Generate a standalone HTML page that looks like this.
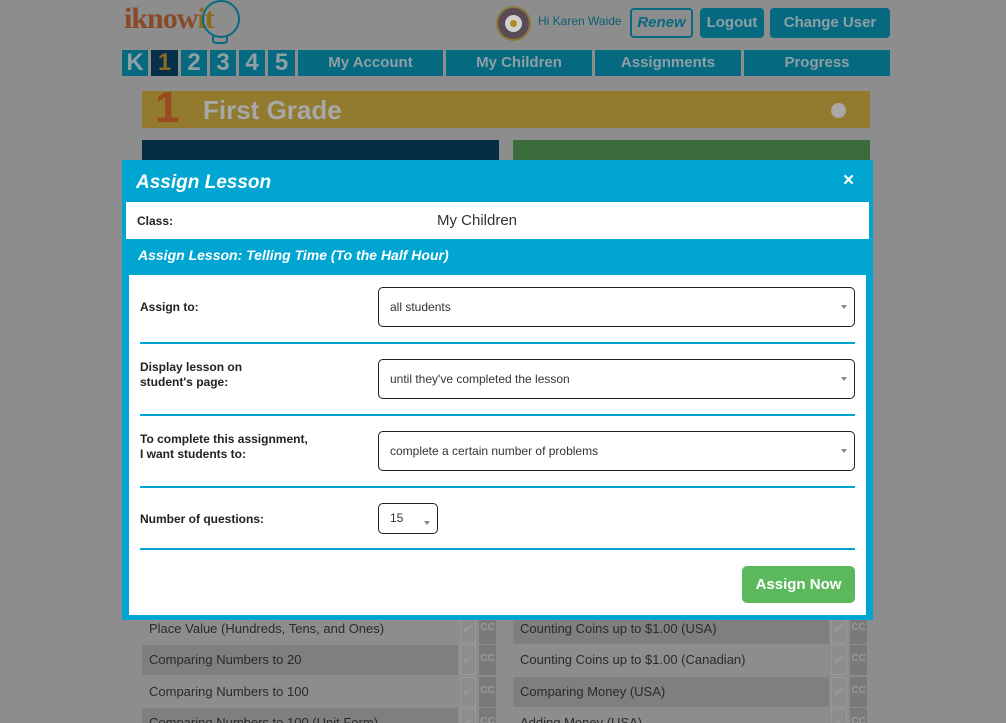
<!DOCTYPE html>
<html style="overflow:hidden;width:1006px;height:723px"><head><meta charset="utf-8"><style>
*{box-sizing:border-box;margin:0;padding:0}
body{width:1006px;height:723px;overflow:hidden;background:#8d8d8d;font-family:"Liberation Sans",sans-serif;position:relative}
.a{position:absolute}
.nav{background:#056a80;color:#8f9fa6;font-weight:bold;text-align:center}
.lbl{position:absolute;left:140px;font-size:12px;font-weight:bold;color:#222;line-height:15px}
.sel{position:absolute;left:378px;width:477px;height:40px;border:1px solid #222;border-radius:5px;background:#fff;font-size:12px;color:#333;padding:0 11px;line-height:38px}
.sel:after{content:"";position:absolute;right:7px;top:17px;border:3px solid transparent;border-top:4px solid #888}
.hr{position:absolute;left:140px;width:715px;height:2px;background:#00a6d1}
.row{position:absolute;height:30px;font-size:13px;color:#2a2a2a;line-height:30px;padding-left:7px}
.ck{position:absolute;width:16px;height:30px;border:1px solid #9a9a9a;color:#9a9a9a;font-size:13px;text-align:center;line-height:28px}
.cc{position:absolute;width:17px;height:30px;background:#7a7a7a;color:#999;font-size:10px;font-weight:bold;text-align:center;line-height:28px}
</style></head><body>
<div class="a" style="left:124px;top:2px;font-family:'Liberation Serif',serif;font-size:30px;font-weight:bold;letter-spacing:-1px"><span style="color:#8a4a2a">iknow</span><span style="color:#8c6a1e">it</span></div>
<div class="a" style="left:202px;top:0;width:38px;height:38px;border:2px solid #086a80;border-radius:50%"></div>
<div class="a" style="left:212px;top:36px;width:16px;height:8px;border:2px solid #086a80;border-top:none;border-radius:0 0 4px 4px"></div>
<div class="a" style="left:496px;top:6px;width:35px;height:35px;border-radius:50%;background:#5a4a55;border:2px solid #8a7a3a"></div>
<div class="a" style="left:505px;top:15px;width:17px;height:17px;border-radius:50%;background:#d0d0d0"></div>
<div class="a" style="left:510px;top:20px;width:7px;height:7px;border-radius:50%;background:#b08a20"></div>
<div class="a" style="left:538px;top:14px;font-size:12px;color:#0b5f73">Hi Karen Waide</div>
<div class="a" style="left:630px;top:8px;width:63px;height:30px;border:2px solid #086a80;border-radius:4px;color:#086a80;font-weight:bold;font-style:italic;font-size:15px;text-align:center;line-height:26px">Renew</div>
<div class="a nav" style="left:700px;top:8px;width:64px;height:30px;border-radius:4px;font-size:15px;line-height:30px">Logout</div>
<div class="a nav" style="left:770px;top:8px;width:120px;height:30px;border-radius:4px;font-size:15px;line-height:30px">Change User</div>
<div class="a nav" style="left:122px;top:50px;width:26px;height:26px;font-size:24px;line-height:26px">K</div>
<div class="a nav" style="left:151px;top:50px;width:27px;height:26px;font-size:24px;line-height:26px;background:#05304a;color:#8a6a20">1</div>
<div class="a nav" style="left:181px;top:50px;width:26px;height:26px;font-size:24px;line-height:26px">2</div>
<div class="a nav" style="left:210px;top:50px;width:26px;height:26px;font-size:24px;line-height:26px">3</div>
<div class="a nav" style="left:239px;top:50px;width:26px;height:26px;font-size:24px;line-height:26px">4</div>
<div class="a nav" style="left:268px;top:50px;width:27px;height:26px;font-size:24px;line-height:26px">5</div>
<div class="a nav" style="left:298px;top:50px;width:145px;height:26px;font-size:15px;line-height:26px">My Account</div>
<div class="a nav" style="left:446px;top:50px;width:146px;height:26px;font-size:15px;line-height:26px">My Children</div>
<div class="a nav" style="left:595px;top:50px;width:146px;height:26px;font-size:15px;line-height:26px">Assignments</div>
<div class="a nav" style="left:744px;top:50px;width:146px;height:26px;font-size:15px;line-height:26px">Progress</div>
<div class="a" style="left:142px;top:91px;width:728px;height:37px;background:#927a2f"></div>
<div class="a" style="left:155px;top:86px;font-size:44px;font-weight:bold;color:#9a4a1e;line-height:44px">1</div>
<div class="a" style="left:203px;top:95px;font-size:26px;font-weight:bold;color:#a8a8a8">First Grade</div>
<div class="a" style="left:831px;top:103px;width:15px;height:15px;border-radius:50%;background:#a8a8a8"></div>
<div class="a" style="left:142px;top:140px;width:357px;height:25px;background:#052e44"></div>
<div class="a" style="left:513px;top:140px;width:357px;height:25px;background:#3a6b3a"></div>
<div class="row" style="left:142px;top:614px;width:316px">Place Value (Hundreds, Tens, and Ones)</div>
<div class="row" style="left:142px;top:645px;width:316px;background:#7f7f7f">Comparing Numbers to 20</div>
<div class="row" style="left:142px;top:677px;width:316px">Comparing Numbers to 100</div>
<div class="row" style="left:142px;top:708px;width:316px;background:#7f7f7f">Comparing Numbers to 100 (Unit Form)</div>
<div class="row" style="left:513px;top:614px;width:316px;background:#7f7f7f">Counting Coins up to $1.00 (USA)</div>
<div class="row" style="left:513px;top:645px;width:316px">Counting Coins up to $1.00 (Canadian)</div>
<div class="row" style="left:513px;top:677px;width:316px;background:#7f7f7f">Comparing Money (USA)</div>
<div class="row" style="left:513px;top:708px;width:316px">Adding Money (USA)</div>
<div class="ck" style="left:460px;top:614px">✔</div><div class="cc" style="left:479px;top:614px">CC</div>
<div class="ck" style="left:460px;top:645px">✔</div><div class="cc" style="left:479px;top:645px">CC</div>
<div class="ck" style="left:460px;top:677px">✔</div><div class="cc" style="left:479px;top:677px">CC</div>
<div class="ck" style="left:460px;top:708px">✔</div><div class="cc" style="left:479px;top:708px">CC</div>
<div class="ck" style="left:831px;top:614px">✔</div><div class="cc" style="left:850px;top:614px">CC</div>
<div class="ck" style="left:831px;top:645px">✔</div><div class="cc" style="left:850px;top:645px">CC</div>
<div class="ck" style="left:831px;top:677px">✔</div><div class="cc" style="left:850px;top:677px">CC</div>
<div class="ck" style="left:831px;top:708px">✔</div><div class="cc" style="left:850px;top:708px">CC</div>

<div class="a" style="left:122px;top:160px;width:751px;height:460px;background:#00a6d1"></div>
<div class="a" style="left:136px;top:172px;color:#fff;font-size:19px;font-weight:bold;font-style:italic">Assign Lesson</div>
<div class="a" style="left:843px;top:170px;color:#fff;font-size:19px;font-weight:bold">×</div>
<div class="a" style="left:126px;top:202px;width:743px;height:37px;background:#fff"></div>
<div class="a" style="left:137px;top:214px;font-size:12px;font-weight:bold;color:#222">Class:</div>
<div class="a" style="left:437px;top:212px;font-size:15px;color:#333">My Children</div>
<div class="a" style="left:138px;top:247px;color:#fff;font-size:14px;font-weight:bold;font-style:italic">Assign Lesson: Telling Time (To the Half Hour)</div>
<div class="a" style="left:129px;top:275px;width:737px;height:340px;background:#fff"></div>
<div class="lbl" style="top:300px">Assign to:</div>
<div class="sel" style="top:287px">all students</div>
<div class="hr" style="top:342px"></div>
<div class="lbl" style="top:360px">Display lesson on<br>student's page:</div>
<div class="sel" style="top:359px">until they've completed the lesson</div>
<div class="hr" style="top:414px"></div>
<div class="lbl" style="top:432px">To complete this assignment,<br>I want students to:</div>
<div class="sel" style="top:431px">complete a certain number of problems</div>
<div class="hr" style="top:486px"></div>
<div class="lbl" style="top:512px">Number of questions:</div>
<div class="sel" style="top:503px;width:60px;height:31px;line-height:29px">15</div>
<div class="hr" style="top:548px"></div>
<div class="a" style="left:742px;top:566px;width:113px;height:37px;background:#5cb85c;border-radius:5px;color:#fff;font-size:15px;font-weight:bold;text-align:center;line-height:37px">Assign Now</div>
</body></html>
